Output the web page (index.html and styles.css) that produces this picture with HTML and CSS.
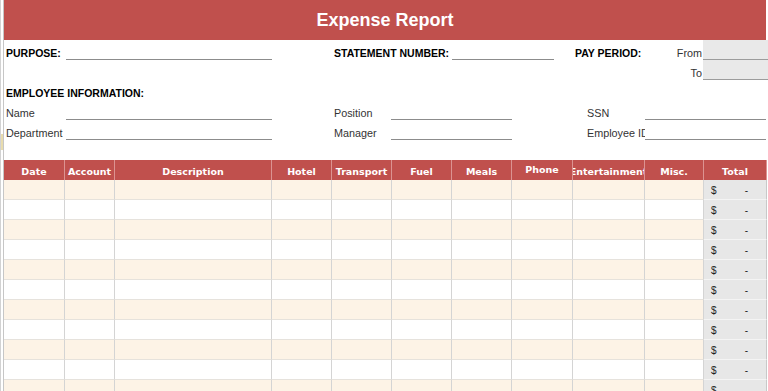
FILE: index.html
```html
<!DOCTYPE html>
<html>
<head>
<meta charset="utf-8">
<link rel="stylesheet" href="styles.css">
</head>
<body>
<div class="sheet">
  <div class="gutter"><div class="mark"></div></div>
  <div class="main">
    <header class="title">Expense Report</header>
    <div class="form">
      <div class="f b pl c1 r1">PURPOSE:</div>
      <div class="f line c2 r1"></div>
      <div class="f b c4 s2 r1">STATEMENT NUMBER:</div>
      <div class="f line c6 s2 r1"></div>
      <div class="f b c9 s2 r1">PAY PERIOD:</div>
      <div class="f right c11 r1">From</div>
      <div class="f box c12 r1"></div>
      <div class="f right c11 r2">To</div>
      <div class="f box c12 r2"></div>
      <div class="f b pl c1 s3 r3">EMPLOYEE INFORMATION:</div>
      <div class="f pl c1 r4">Name</div>
      <div class="f line c2 r4"></div>
      <div class="f c4 r4">Position</div>
      <div class="f line c5 s2 r4"></div>
      <div class="f c10 r4">SSN</div>
      <div class="f line end c11 s2 r4"></div>
      <div class="f pl c1 r5">Department</div>
      <div class="f line c2 r5"></div>
      <div class="f c4 r5">Manager</div>
      <div class="f line c5 s2 r5"></div>
      <div class="f clip c10 r5">Employee ID</div>
      <div class="f line end c11 s2 r5"></div>
    </div>
    <div class="grid">
      <div class="thead">
        <div class="th">Date</div>
        <div class="th">Account</div>
        <div class="th">Description</div>
        <div class="th">Hotel</div>
        <div class="th">Transport</div>
        <div class="th">Fuel</div>
        <div class="th">Meals</div>
        <div class="th up">Phone</div>
        <div class="th">Entertainment</div>
        <div class="th">Misc.</div>
        <div class="th">Total</div>
      </div>
      <div class="tr odd"><span class="td"></span><span class="td"></span><span class="td"></span><span class="td"></span><span class="td"></span><span class="td"></span><span class="td"></span><span class="td"></span><span class="td"></span><span class="td"></span><span class="td tot"><i>$</i><i>-</i></span></div>
      <div class="tr"><span class="td"></span><span class="td"></span><span class="td"></span><span class="td"></span><span class="td"></span><span class="td"></span><span class="td"></span><span class="td"></span><span class="td"></span><span class="td"></span><span class="td tot"><i>$</i><i>-</i></span></div>
      <div class="tr odd"><span class="td"></span><span class="td"></span><span class="td"></span><span class="td"></span><span class="td"></span><span class="td"></span><span class="td"></span><span class="td"></span><span class="td"></span><span class="td"></span><span class="td tot"><i>$</i><i>-</i></span></div>
      <div class="tr"><span class="td"></span><span class="td"></span><span class="td"></span><span class="td"></span><span class="td"></span><span class="td"></span><span class="td"></span><span class="td"></span><span class="td"></span><span class="td"></span><span class="td tot"><i>$</i><i>-</i></span></div>
      <div class="tr odd"><span class="td"></span><span class="td"></span><span class="td"></span><span class="td"></span><span class="td"></span><span class="td"></span><span class="td"></span><span class="td"></span><span class="td"></span><span class="td"></span><span class="td tot"><i>$</i><i>-</i></span></div>
      <div class="tr"><span class="td"></span><span class="td"></span><span class="td"></span><span class="td"></span><span class="td"></span><span class="td"></span><span class="td"></span><span class="td"></span><span class="td"></span><span class="td"></span><span class="td tot"><i>$</i><i>-</i></span></div>
      <div class="tr odd"><span class="td"></span><span class="td"></span><span class="td"></span><span class="td"></span><span class="td"></span><span class="td"></span><span class="td"></span><span class="td"></span><span class="td"></span><span class="td"></span><span class="td tot"><i>$</i><i>-</i></span></div>
      <div class="tr"><span class="td"></span><span class="td"></span><span class="td"></span><span class="td"></span><span class="td"></span><span class="td"></span><span class="td"></span><span class="td"></span><span class="td"></span><span class="td"></span><span class="td tot"><i>$</i><i>-</i></span></div>
      <div class="tr odd"><span class="td"></span><span class="td"></span><span class="td"></span><span class="td"></span><span class="td"></span><span class="td"></span><span class="td"></span><span class="td"></span><span class="td"></span><span class="td"></span><span class="td tot"><i>$</i><i>-</i></span></div>
      <div class="tr"><span class="td"></span><span class="td"></span><span class="td"></span><span class="td"></span><span class="td"></span><span class="td"></span><span class="td"></span><span class="td"></span><span class="td"></span><span class="td"></span><span class="td tot"><i>$</i><i>-</i></span></div>
      <div class="tr odd"><span class="td"></span><span class="td"></span><span class="td"></span><span class="td"></span><span class="td"></span><span class="td"></span><span class="td"></span><span class="td"></span><span class="td"></span><span class="td"></span><span class="td tot"><i>$</i><i>-</i></span></div>
    </div>
  </div>
</div>
</body>
</html>
```
FILE: styles.css
```css
* { box-sizing: border-box; margin: 0; padding: 0; }
html, body { height: 100%; overflow: hidden; background: #fff; }
body { font-family: "Liberation Sans", Arial, sans-serif; }

.sheet { display: flex; height: 391px; }
.gutter {
  width: 4px; flex: none;
  border-left: 1px solid #d2d2d2;
  border-right: 1px solid #c6c6c6;
  display: flex; flex-direction: column;
}
.mark { margin-top: 134px; height: 16px; background: #e8dcae; }
.main { width: 764px; flex: none; }

.title {
  width: 762px; height: 40px;
  background: #c0504d; color: #fff;
  font-weight: bold; font-size: 18px; line-height: 40px;
  text-align: center;
}

.form {
  display: grid;
  grid-template-columns: 62px 206px 62px 57px 61px 60px 42px 21px 12px 58px 58px 65px;
  grid-template-rows: repeat(6, 20px);
}
.f {
  display: flex; align-items: flex-end;
  padding-bottom: 1px;
  font-size: 10.8px; line-height: 12px; color: #333;
  white-space: nowrap;
}
.b { font-weight: bold; font-size: 10.5px; color: #000; }
.pl { padding-left: 2px; }
.right { justify-content: flex-end; padding-right: 1px; }
.clip { overflow: hidden; }
.line { border-bottom: 1px solid #8c8c8c; }
.end { margin-right: 2px; }
.box { background: #e9e9e9; border-bottom: 1px solid #9c9c9c; }

.c1 { grid-column-start: 1; } .c2 { grid-column-start: 2; } .c4 { grid-column-start: 4; }
.c5 { grid-column-start: 5; } .c6 { grid-column-start: 6; } .c9 { grid-column-start: 9; }
.c10 { grid-column-start: 10; } .c11 { grid-column-start: 11; } .c12 { grid-column-start: 12; }
.s2 { grid-column-end: span 2; } .s3 { grid-column-end: span 3; }
.r1 { grid-row: 1; } .r2 { grid-row: 2; } .r3 { grid-row: 3; } .r4 { grid-row: 4; } .r5 { grid-row: 5; }

.thead, .tr {
  display: grid;
  grid-template-columns: 61px 50px 157px 60px 60px 60px 60px 61px 72px 59px 63px;
  height: 20px;
}
.th {
  display: flex; justify-content: center;
  background: #c0504d; color: #fff;
  font-family: "DejaVu Sans", Verdana, sans-serif;
  font-weight: bold; font-size: 9.5px;
  line-height: 17px; padding-top: 3px;
  border-right: 1px solid #dc9391;
  white-space: nowrap; overflow: hidden;
}
.th.up { padding-top: 1px; }
.td {
  display: block;
  border-right: 1px solid #d4d4d4;
  border-bottom: 1px solid #e6e2dc;
  background: #fff;
}
.odd .td { background: #fdf3e6; }
.tr .tot, .odd .tot {
  background: #e7e7e7;
  border-bottom: 1px solid #f4f4f4;
  border-right: 1px solid #c8c8c8;
  display: flex; justify-content: space-between; align-items: flex-end;
  padding: 0 18px 2px 7px;
  font-size: 10px; line-height: 12px; color: #222;
}
.tot i { font-style: normal; }
```
